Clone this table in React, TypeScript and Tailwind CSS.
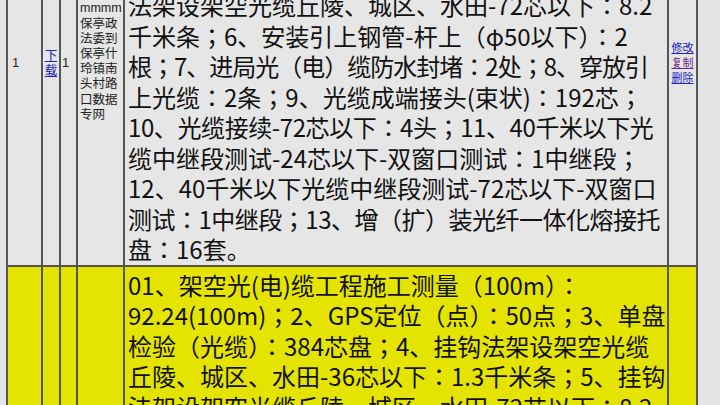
import React from "react";

const lines: { t: string; c?: string }[] = [
  { t: "01、架空光(电)缆工程施工测量（100m）：" },
  { t: "92.24(100m)；2、GPS定位（点）：50点；3、单盘" },
  { t: "检验（光缆）：384芯盘；4、挂钩法架设架空光缆" },
  { t: "丘陵、城区、水田-36芯以下：1.3千米条；5、挂钩" },
  { t: "法架设架空光缆丘陵、城区、水田-72芯以下：8.2" },
  { t: "千米条；6、安装引上钢管-杆上（φ50以下）：2" },
  { t: "根；7、进局光（电）缆防水封堵：2处；8、穿放引", c: "tracking-[-1px]" },
  { t: "上光缆：2条；9、光缆成端接头(束状)：192芯；" },
  { t: "10、光缆接续-72芯以下：4头；11、40千米以下光", c: "tracking-[-0.4px]" },
  { t: "缆中继段测试-24芯以下-双窗口测试：1中继段；" },
  { t: "12、40千米以下光缆中继段测试-72芯以下-双窗口" },
  { t: "测试：1中继段；13、增（扩）装光纤一体化熔接托", c: "tracking-[-0.5px]" },
  { t: "盘：16套。" },
];

const cjk = { fontFamily: '"Noto Sans CJK JP", "Noto Sans", sans-serif' };
const small = { fontFamily: '"Liberation Sans", "Noto Sans CJK JP", sans-serif' };

function Row({ bg }: { bg: string }) {
  const cell = "border-2 border-[#555555] align-middle p-0";
  return (
    <tr className={bg}>
      <td className={`${cell} pl-[4px] pb-[5px] text-[13px] text-[#222]`} style={small}>1</td>
      <td className={`${cell} pb-[5px] text-center text-[12.5px] leading-[15px]`}>
        <a className="text-[#2020c0] underline">下载</a>
      </td>
      <td className={`${cell} pl-[1px] pb-[5px] text-[13px] text-[#222]`} style={small}>1</td>
      <td className={`${cell} pl-[2px] pb-[5px] text-[12.5px] leading-[15.2px] text-[#222]`} style={small}>
        mmmm 保亭政法委到保亭什玲镇南头村路口数据专网
      </td>
      <td className={`${cell} pl-[3px] pr-0 pt-[3px] pb-0 text-[24px] leading-[30.5px] text-[#111] overflow-hidden`}>
        {lines.map((l, i) => (
          <div key={i} className={`whitespace-nowrap ${l.c ?? ""}`}>
            {l.t}
          </div>
        ))}
      </td>
      <td className={`${cell} pb-[5px] text-center text-[11px] leading-[15px]`}>
        <div className="flex flex-col items-center">
          <a className="text-[#2020c0] underline">修改</a>
          <a className="text-[#6a2a8a] underline">复制</a>
          <a className="text-[#2020c0] underline">删除</a>
        </div>
      </td>
    </tr>
  );
}

export default function App() {
  return (
    <div
      className="w-[720px] h-[405px] overflow-hidden bg-[#e4e4e4] [text-autospace:no-autospace]"
      style={cjk}
    >
      <div className="pl-[6px] -mt-[137px]">
        <table className="table-fixed border-collapse w-[692px]">
          <colgroup>
            <col className="w-[35px]" />
            <col className="w-[18px]" />
            <col className="w-[17px]" />
            <col className="w-[47px]" />
            <col className="w-[544px]" />
            <col className="w-[29px]" />
          </colgroup>
          <tbody>
            <Row bg="bg-[#e6e6e6]" />
            <Row bg="bg-[#e4e400]" />
          </tbody>
        </table>
      </div>
    </div>
  );
}
